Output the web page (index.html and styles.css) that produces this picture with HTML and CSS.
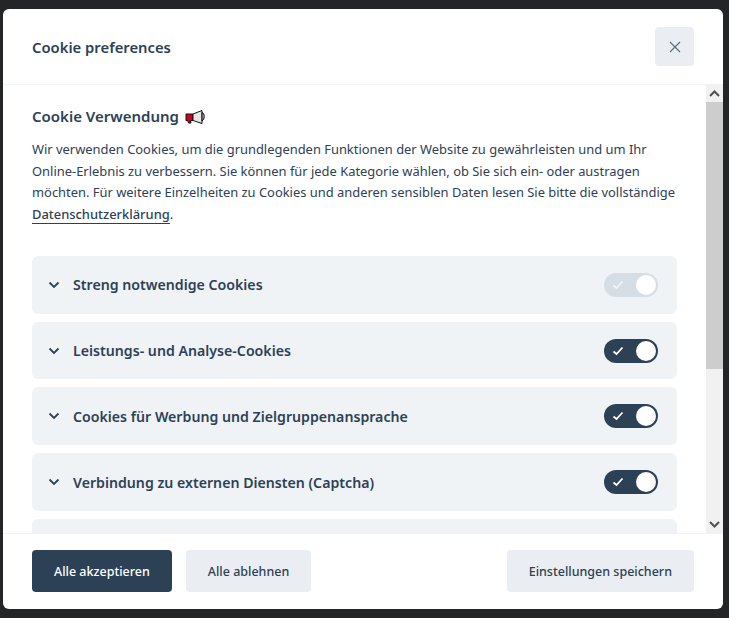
FILE: index.html
```html
<!DOCTYPE html>
<html lang="de">
<head>
<meta charset="utf-8">
<title>Cookie preferences</title>
<link rel="stylesheet" href="styles.css">
</head>
<body>
<div class="modal">
  <header class="head">
    <h2 class="head-title">Cookie preferences</h2>
    <button class="close" aria-label="Close">
      <svg width="12" height="12" viewBox="0 0 12 12"><path d="M1 1l10 10M11 1L1 11" stroke="#5f6f82" stroke-width="1.2" fill="none"/></svg>
    </button>
  </header>
  <div class="middle">
    <div class="body">
      <h3 class="section-title">Cookie Verwendung
        <svg class="megaphone" width="21" height="15" viewBox="0 0 21 15"><path d="M1 5h7v6.500H5.500L6 14H3.500l-.8-2.500H1z" fill="#d0021b" stroke="#111" stroke-width="1"/><path d="M8 5l9-3.500v13L8 11.500z" fill="#e6e6e6" stroke="#111" stroke-width="1"/><path d="M17 3.500c3 1 3 7 0 8.500z" fill="#aaa" stroke="#111" stroke-width="1"/></svg>
      </h3>
      <p class="intro">Wir verwenden Cookies, um die grundlegenden Funktionen der Website zu gewährleisten und um Ihr Online-Erlebnis zu verbessern. Sie können für jede Kategorie wählen, ob Sie sich ein- oder austragen möchten. Für weitere Einzelheiten zu Cookies und anderen sensiblen Daten lesen Sie bitte die vollständige <a class="link" href="#">Datenschutzerklärung</a>.</p>
      <div class="rows">
        <div class="row">
          <svg class="chev" width="12" height="8" viewBox="0 0 12 8"><path d="M1.500 1.500L6 6l4.500-4.500" stroke="#2d4156" stroke-width="1.800" fill="none"/></svg>
          <span class="row-label">Streng notwendige Cookies</span>
          <span class="toggle disabled"><svg class="tick" width="12" height="10" viewBox="0 0 12 10"><path d="M1.500 5.500L4.500 8l6-6.500" fill="none" stroke="#fff" stroke-width="1.800"/></svg><span class="knob"></span></span>
        </div>
        <div class="row">
          <svg class="chev" width="12" height="8" viewBox="0 0 12 8"><path d="M1.500 1.500L6 6l4.500-4.500" stroke="#2d4156" stroke-width="1.800" fill="none"/></svg>
          <span class="row-label">Leistungs- und Analyse-Cookies</span>
          <span class="toggle"><svg class="tick" width="12" height="10" viewBox="0 0 12 10"><path d="M1.500 5.500L4.500 8l6-6.500" fill="none" stroke="#fff" stroke-width="1.800"/></svg><span class="knob"></span></span>
        </div>
        <div class="row">
          <svg class="chev" width="12" height="8" viewBox="0 0 12 8"><path d="M1.500 1.500L6 6l4.500-4.500" stroke="#2d4156" stroke-width="1.800" fill="none"/></svg>
          <span class="row-label">Cookies für Werbung und Zielgruppenansprache</span>
          <span class="toggle"><svg class="tick" width="12" height="10" viewBox="0 0 12 10"><path d="M1.500 5.500L4.500 8l6-6.500" fill="none" stroke="#fff" stroke-width="1.800"/></svg><span class="knob"></span></span>
        </div>
        <div class="row">
          <svg class="chev" width="12" height="8" viewBox="0 0 12 8"><path d="M1.500 1.500L6 6l4.500-4.500" stroke="#2d4156" stroke-width="1.800" fill="none"/></svg>
          <span class="row-label">Verbindung zu externen Diensten (Captcha)</span>
          <span class="toggle"><svg class="tick" width="12" height="10" viewBox="0 0 12 10"><path d="M1.500 5.500L4.500 8l6-6.500" fill="none" stroke="#fff" stroke-width="1.800"/></svg><span class="knob"></span></span>
        </div>
        <div class="row"></div>
      </div>
    </div>
    <div class="scrollbar" aria-hidden="true">
      <div class="sb-btn"><svg width="11" height="7" viewBox="0 0 11 7"><path d="M1 6l4.500-4.500L10 6" fill="none" stroke="#505050" stroke-width="2"/></svg></div>
      <div class="sb-track"><div class="sb-thumb"></div></div>
      <div class="sb-btn"><svg width="11" height="7" viewBox="0 0 11 7"><path d="M1 1l4.500 4.500L10 1" fill="none" stroke="#505050" stroke-width="2"/></svg></div>
    </div>
  </div>
  <footer class="foot">
    <button class="btn primary">Alle akzeptieren</button>
    <button class="btn">Alle ablehnen</button>
    <button class="btn save">Einstellungen speichern</button>
  </footer>
</div>
</body>
</html>
```

FILE: styles.css
```css
* { box-sizing: border-box; }
html, body { margin: 0; height: 100%; }
body {
  background: #242526;
  padding: 9px 6px 9px 3px;
  font-family: "Noto Sans", sans-serif;
  color: #2d4156;
  overflow: hidden;
}
.modal {
  height: 600px;
  background: #fff;
  border-radius: 6px;
  display: flex;
  flex-direction: column;
  overflow: hidden;
}
.head {
  flex: none;
  height: 76px;
  padding: 0 29px;
  display: flex;
  align-items: center;
  justify-content: space-between;
  border-bottom: 1px solid #f1f3f5;
}
.head-title {
  margin: 0;
  font-size: 14.8px;
  font-weight: 600;
}
.close {
  width: 39px;
  height: 39px;
  padding: 0;
  border: 0;
  border-radius: 4px;
  background: #eaeef2;
  display: flex;
  align-items: center;
  justify-content: center;
}
.middle {
  flex: 1;
  min-height: 0;
  display: flex;
}
.body {
  flex: 1;
  min-width: 0;
  overflow: hidden;
  padding: 20px 29px 0;
}
.scrollbar {
  flex: none;
  width: 17px;
  background: #f1f1f1;
  display: flex;
  flex-direction: column;
}
.sb-btn {
  flex: none;
  height: 17px;
  display: flex;
  align-items: center;
  justify-content: center;
}
.sb-track { flex: 1; }
.sb-thumb { height: 267px; background: #cdcdcd; }
.section-title {
  margin: 0 0 12px;
  font-size: 15px;
  line-height: 22px;
  font-weight: 600;
  display: flex;
  align-items: center;
  gap: 6px;
}
.intro {
  margin: 0 -3px 0 0;
  font-size: 12.92px;
  line-height: 21.6px;
  color: #2d4156;
}
.link {
  color: #2d4156;
  font-weight: 500;
  text-decoration: none;
  border-bottom: 1px solid #2d4156;
}
.rows {
  margin-top: 30.6px;
  display: flex;
  flex-direction: column;
  gap: 8px;
}
.row {
  flex: none;
  height: 57.750px;
  background: #eff3f6;
  border-radius: 6px;
  padding: 0 19px 0 16px;
  display: flex;
  align-items: center;
}
.chev { flex: none; margin-right: 13px; }
.row-label {
  flex: 1;
  font-size: 14.170px;
  font-weight: 600;
}
.toggle {
  flex: none;
  position: relative;
  width: 54px;
  height: 24px;
  border-radius: 12px;
  background: #2d4156;
  display: flex;
  align-items: center;
  padding-left: 8px;
}
.toggle.disabled { background: #d5dee4; }
.toggle.disabled .tick { opacity: .7; }
.knob {
  position: absolute;
  right: 2px;
  top: 2px;
  width: 20px;
  height: 20px;
  border-radius: 50%;
  background: #fff;
}
.foot {
  flex: none;
  height: 76px;
  padding: 16px 29px 17px;
  display: flex;
  gap: 14px;
  border-top: 1px solid #f1f3f5;
}
.btn {
  height: 42px;
  padding: 0 22px;
  border: 0;
  border-radius: 4px;
  background: #eaeef2;
  color: #2d4156;
  font-family: inherit;
  font-size: 12.500px;
  font-weight: 500;
}
.btn.primary { background: #2d4156; color: #fff; }
.btn.save { margin-left: auto; }
```
